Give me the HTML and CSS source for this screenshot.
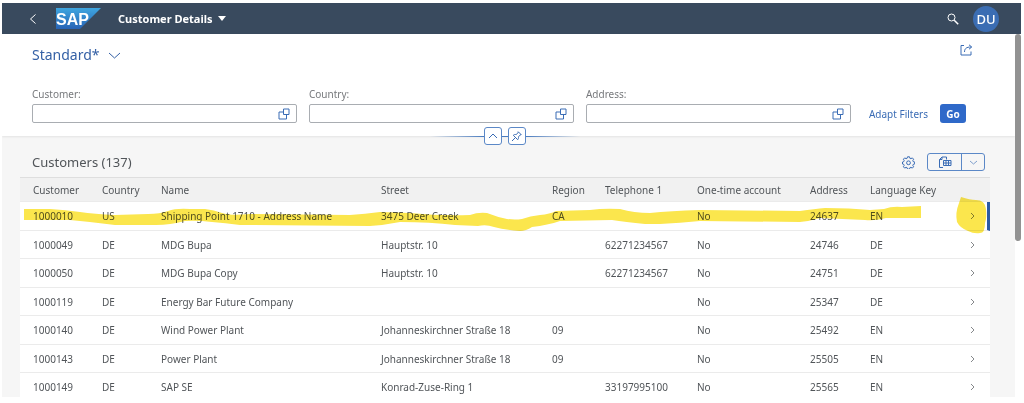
FILE: index.html
```
<!DOCTYPE html>
<html lang="en">
<head>
    <meta charset="UTF-8">
    <title>Customer Details</title>
    <link rel="stylesheet" href="styles.css">
</head>
<body>
    <div class="app">
        <header class="shell">
            <button class="back" aria-label="Back">
                <svg width="8" height="12" viewBox="0 0 8 12"><path d="M6.500 1.500L1.500 6l5 4.500" /></svg>
            </button>
            <a class="logo" href="#" aria-label="SAP home">
                <svg width="45" height="21" viewBox="0 0 45 21">
                    <defs>
                        <linearGradient id="sap" x1="0" y1="0" x2="0" y2="1">
                            <stop offset="0" stop-color="#3fa6e0" />
                            <stop offset="1" stop-color="#2763b5" />
                        </linearGradient>
                    </defs>
                    <path d="M0 0h45L24 21H0z" fill="url(#sap)" />
                    <text x="0" y="17">SAP</text>
                </svg>
            </a>
            <button class="app-title">Customer Details
                <svg width="8" height="5" viewBox="0 0 8 5"><path d="M0 0h8L4 5z" /></svg>
            </button>
            <button class="search" aria-label="Search">
                <svg width="12" height="12" viewBox="0 0 12 12"><circle cx="4.500" cy="4.500" r="3.500" /><path d="M7.200 7.200l4 4" stroke-width="1.500" /></svg>
            </button>
            <button class="avatar">DU</button>
        </header>

        <div class="body">
            <main class="page">
                <section class="filters">
                    <div class="variant-row">
                        <button class="variant">Standard*
                            <svg width="13" height="7" viewBox="0 0 13 7"><path d="M1 1l5.500 5L12 1" /></svg>
                        </button>
                        <button class="share" aria-label="Share">
                            <svg width="13" height="12" viewBox="0 0 13 12"><path d="M4 1.500H1v9.500h10V7.500M4.500 8c0-3.500 2-5 6.500-5M9 .8L11.800 3 9 5.200" /></svg>
                        </button>
                    </div>
                    <form class="filter-row">
                        <div class="field">
                            <label for="customer">Customer:</label>
                            <div class="input-box">
                                <input type="text" id="customer" name="customer">
                                <button type="button" aria-label="Select customer">
                                    <svg width="12" height="12" viewBox="0 0 12 12"><path d="M5.500 1h5.500v5.500H5.500zM5.500 4H1v7h7.500V6.500" /></svg>
                                </button>
                            </div>
                        </div>
                        <div class="field">
                            <label for="country">Country:</label>
                            <div class="input-box">
                                <input type="text" id="country" name="country">
                                <button type="button" aria-label="Select country">
                                    <svg width="12" height="12" viewBox="0 0 12 12"><path d="M5.500 1h5.500v5.500H5.500zM5.500 4H1v7h7.500V6.500" /></svg>
                                </button>
                            </div>
                        </div>
                        <div class="field">
                            <label for="address">Address:</label>
                            <div class="input-box">
                                <input type="text" id="address" name="address">
                                <button type="button" aria-label="Select address">
                                    <svg width="12" height="12" viewBox="0 0 12 12"><path d="M5.500 1h5.500v5.500H5.500zM5.500 4H1v7h7.500V6.500" /></svg>
                                </button>
                            </div>
                        </div>
                        <button type="button" class="adapt">Adapt Filters</button>
                        <button type="submit" class="go">Go</button>
                    </form>
                </section>

                <div class="header-toggle">
                    <span class="line line-left"></span>
                    <button aria-label="Collapse header">
                        <svg width="10" height="6" viewBox="0 0 10 6"><path d="M1 5l4-4 4 4" /></svg>
                    </button>
                    <span class="line line-mid"></span>
                    <button aria-label="Pin header">
                        <svg width="12" height="12" viewBox="0 0 12 12"><path d="M7 1.500l3.500 3.500M7.500 2L5.300 4.600C4 4.300 3 4.600 2.300 5.300l4.400 4.400c.7-.7 1-1.700.7-3L10 4.500M4.400 7.600L1 11" /></svg>
                    </button>
                    <span class="line line-right"></span>
                </div>

                <section class="list">
                    <div class="toolbar">
                        <h2>Customers (137)</h2>
                        <button class="settings" aria-label="Settings">
                            <svg width="13" height="13" viewBox="0 0 13 13"><path d="M5.500 .8h2l.4 1.500 1 .4 1.400-.8 1.300 1.300-.8 1.400.4 1 1.500.4v2l-1.500.4-.4 1 .8 1.400-1.300 1.300-1.400-.8-1 .4-.4 1.500h-2l-.4-1.500-1-.4-1.400.8L1.400 10.800l.8-1.400-.4-1L.5 8V6l1.300-.4.4-1-.8-1.400 1.300-1.300 1.400.8 1-.4z" /><circle cx="6.500" cy="6.800" r="1.900" /></svg>
                        </button>
                        <div class="split">
                            <button aria-label="Export to spreadsheet">
                                <svg width="14" height="12" viewBox="0 0 14 12"><path d="M5 11.500H1.500V3.500L4 1H8.500v2.500M1.500 3.500H4V1" /><path d="M5.500 4.500h7.500v5H5.500zM5.500 7H13M8 4.500v5M10.500 4.500v5" /></svg>
                            </button>
                            <button class="split-arrow" aria-label="More export options">
                                <svg width="9" height="5" viewBox="0 0 9 5"><path d="M1 1l3.500 3L8 1" /></svg>
                            </button>
                        </div>
                    </div>

                    <div class="table-wrap">
                        <table class="table">
                            <colgroup>
                                <col class="c-customer">
                                <col class="c-country">
                                <col class="c-name">
                                <col class="c-street">
                                <col class="c-region">
                                <col class="c-phone">
                                <col class="c-onetime">
                                <col class="c-address">
                                <col class="c-lang">
                                <col class="c-nav">
                            </colgroup>
                            <thead>
                                <tr>
                                    <th>Customer</th>
                                    <th>Country</th>
                                    <th>Name</th>
                                    <th>Street</th>
                                    <th>Region</th>
                                    <th>Telephone 1</th>
                                    <th>One-time account</th>
                                    <th>Address</th>
                                    <th>Language Key</th>
                                    <th></th>
                                </tr>
                            </thead>
                            <tbody>
                                <tr class="active">
                                    <td>1000010</td><td>US</td><td>Shipping Point 1710 - Address Name</td><td>3475 Deer Creek</td><td>CA</td><td></td><td>No</td><td>24637</td><td>EN</td>
                                    <td><svg width="5" height="8" viewBox="0 0 5 8"><path d="M1 1l3 3-3 3" /></svg></td>
                                </tr>
                                <tr>
                                    <td>1000049</td><td>DE</td><td>MDG Bupa</td><td>Hauptstr. 10</td><td></td><td>62271234567</td><td>No</td><td>24746</td><td>DE</td>
                                    <td><svg width="5" height="8" viewBox="0 0 5 8"><path d="M1 1l3 3-3 3" /></svg></td>
                                </tr>
                                <tr>
                                    <td>1000050</td><td>DE</td><td>MDG Bupa Copy</td><td>Hauptstr. 10</td><td></td><td>62271234567</td><td>No</td><td>24751</td><td>DE</td>
                                    <td><svg width="5" height="8" viewBox="0 0 5 8"><path d="M1 1l3 3-3 3" /></svg></td>
                                </tr>
                                <tr>
                                    <td>1000119</td><td>DE</td><td>Energy Bar Future Company</td><td></td><td></td><td></td><td>No</td><td>25347</td><td>DE</td>
                                    <td><svg width="5" height="8" viewBox="0 0 5 8"><path d="M1 1l3 3-3 3" /></svg></td>
                                </tr>
                                <tr>
                                    <td>1000140</td><td>DE</td><td>Wind Power Plant</td><td>Johanneskirchner Straße 18</td><td>09</td><td></td><td>No</td><td>25492</td><td>EN</td>
                                    <td><svg width="5" height="8" viewBox="0 0 5 8"><path d="M1 1l3 3-3 3" /></svg></td>
                                </tr>
                                <tr>
                                    <td>1000143</td><td>DE</td><td>Power Plant</td><td>Johanneskirchner Straße 18</td><td>09</td><td></td><td>No</td><td>25505</td><td>EN</td>
                                    <td><svg width="5" height="8" viewBox="0 0 5 8"><path d="M1 1l3 3-3 3" /></svg></td>
                                </tr>
                                <tr>
                                    <td>1000149</td><td>DE</td><td>SAP SE</td><td>Konrad-Zuse-Ring 1</td><td></td><td>33197995100</td><td>No</td><td>25565</td><td>EN</td>
                                    <td><svg width="5" height="8" viewBox="0 0 5 8"><path d="M1 1l3 3-3 3" /></svg></td>
                                </tr>
                            </tbody>
                        </table>
                        <!-- marker strokes over the first row -->
                        <svg class="marker" viewBox="20 178 970 60" preserveAspectRatio="none">
                            <path d="M24 210L50 210Q66 211 80 213T115 216L148 215Q160 215 168 212T190 210L205 210Q214 211 222 214T250 215L350 216Q365 215 380 213L410 214Q440 217 470 216Q478 213 487 214Q497 218 507 220Q515 221 522 220Q530 217 540 216T556 212L590 211Q604 209 620 210Q634 214 650 214Q670 212 700 211L800 212Q815 210 825 209Q850 209 870 211L884 210Q892 207 902 208L921 207V219L886 219Q875 222 865 221L820 219Q810 222 800 223L700 222Q680 224 660 225L645 225Q625 223 612 221L560 222Q548 226 532 228Q526 232 520 232Q505 231 494 228Q486 225 478 227L455 226Q430 223 400 223Q385 226 370 227L240 226Q225 224 212 223Q196 221 185 222Q170 226 156 226L115 226Q92 223 70 221L24 221Z" />
                            <path d="M961 198Q970 201 976 201Q985 201 986 210Q987 218 985 224Q985 234 980 234Q974 235 968 232Q960 229 957 223Q955 214 959 204Z" />
                        </svg>
                    </div>
                </section>
            </main>
            <div class="scrollbar"><div class="thumb"></div></div>
        </div>
    </div>
</body>
</html>
```
FILE: styles.css
```
* {
    box-sizing: border-box;
}

body {
    margin: 0;
    padding: 3px 3px 6px 2px;
    font-family: "Noto Sans", "Open Sans", sans-serif;
    font-size: 10px;
    line-height: 14px;
    color: #515559;
    background-color: #fff;
}

button {
    display: flex;
    align-items: center;
    justify-content: center;
    padding: 0;
    border: none;
    background: none;
    font: inherit;
    color: #3a6cb5;
    cursor: pointer;
}

svg {
    display: block;
    fill: none;
    stroke: currentColor;
}

.app {
    display: flex;
    flex-direction: column;
    height: calc(100vh - 9px);
    overflow: hidden;
}

/* top bar */
.shell {
    display: flex;
    flex: none;
    align-items: center;
    height: 31px;
    padding: 0 22px 0 27px;
    background-color: #394a5e;
}

.shell button {
    color: #fff;
}

.logo {
    margin: 0 17px 0 19px;
}

.logo svg {
    stroke: none;
}

.logo text {
    font-family: "Liberation Sans", Arial, sans-serif;
    font-size: 16px;
    font-weight: bold;
    fill: #fff;
}

.shell .app-title {
    gap: 5px;
    font-size: 11px;
    font-weight: bold;
}

.app-title svg {
    fill: currentColor;
    stroke: none;
}

.search {
    margin: 0 14px 0 auto;
}

.shell .avatar {
    width: 26px;
    height: 26px;
    border-radius: 50%;
    background-color: #3b6db3;
    font-size: 13px;
    font-weight: 500;
}

.body {
    display: flex;
    flex: 1;
    min-height: 0;
}

.page {
    flex: 1;
    min-width: 0;
    background-color: #f6f6f6;
}

.scrollbar {
    width: 6px;
}

.thumb {
    height: 57%;
    border-radius: 3px;
    background-color: #929292;
}

/* filter bar */
.filters {
    padding: 7px 49px 13px 30px;
    background-color: #fff;
    box-shadow: 0 1px 2px rgba(0, 0, 0, 0.08);
}

.variant-row {
    display: flex;
    align-items: flex-start;
    justify-content: space-between;
    margin-bottom: 18px;
}

.variant {
    gap: 8px;
    height: 28px;
    font-size: 14px;
    color: #3460a5;
}

.share {
    margin: 3px -7px 0 0;
}

.filter-row {
    display: flex;
    align-items: flex-end;
    gap: 12px;
}

.field {
    flex: 1;
    min-width: 0;
}

.field label {
    display: block;
    margin-bottom: 3px;
    color: #77797c;
}

.input-box {
    display: flex;
    height: 19px;
    padding-right: 6px;
    border: 1px solid #a9adb2;
    border-radius: 2px;
    background-color: #fff;
}

.input-box input {
    flex: 1;
    min-width: 0;
    padding: 0 6px;
    border: none;
    outline: none;
    background: none;
    font: inherit;
}

.adapt {
    height: 19px;
    margin-left: 6px;
}

.go {
    width: 26px;
    height: 19px;
    border-radius: 3px;
    background-color: #2f69c9;
    font-weight: bold;
    color: #fff;
}

/* collapse and pin buttons, centred on the edge of the filter bar */
.header-toggle {
    display: flex;
    align-items: center;
    justify-content: center;
    height: 18px;
    margin: -9px 0;
    padding-right: 7px;
    position: relative;
}

.header-toggle button {
    width: 18px;
    height: 18px;
    border: 1px solid #5b88c7;
    border-radius: 3px;
    background-color: #fff;
}

.line {
    width: 54px;
    height: 1px;
}

.line-left {
    background: linear-gradient(to right, transparent, #4a7cc0);
}

.line-mid {
    width: 6px;
    background-color: #4a7cc0;
}

.line-right {
    background: linear-gradient(to left, transparent, #4a7cc0);
}

/* customer list */
.list {
    padding: 17px 25px 0 18px;
}

.toolbar {
    display: flex;
    align-items: center;
    height: 24px;
    padding: 0 5px 6px 12px;
}

.toolbar h2 {
    flex: 1;
    margin: 0;
    font-size: 13px;
    font-weight: normal;
    line-height: 18px;
}

.settings {
    margin-right: 12px;
}

.split {
    display: flex;
    border: 1px solid #5b88c7;
    border-radius: 3px;
}

.split button {
    width: 33px;
    height: 16px;
}

.split .split-arrow {
    width: 23px;
    border-left: 1px solid #5b88c7;
    color: #7f9fcd;
}

.table-wrap {
    position: relative;
}

.table {
    width: 100%;
    table-layout: fixed;
    border-collapse: separate;
    border-spacing: 0;
    background-color: #fff;
}

.c-customer { width: 82px; }
.c-country { width: 59px; }
.c-street { width: 171px; }
.c-region { width: 53px; }
.c-phone { width: 92px; }
.c-onetime { width: 113px; }
.c-address { width: 60px; }
.c-lang { width: 80px; }
.c-nav { width: 40px; }

th,
td {
    height: 28px;
    padding: 0;
    border-bottom: 1px solid #ebebeb;
    font-weight: normal;
    text-align: left;
    white-space: nowrap;
}

th {
    height: 25px;
    border-top: 1px solid #dedede;
    background-color: #f1f1f1;
}

tbody tr:nth-child(odd) td {
    height: 29px;
}

th:first-child,
td:first-child {
    padding-left: 13px;
}

td:last-child {
    padding-left: 20px;
    color: #85888b;
}

.active td:last-child {
    border-right: 3px solid #2c5ba3;
}

.marker {
    position: absolute;
    top: 0;
    left: 0;
    width: 100%;
    height: 60px;
    fill: #fbe64d;
    stroke: none;
    mix-blend-mode: multiply;
    pointer-events: none;
}
```
